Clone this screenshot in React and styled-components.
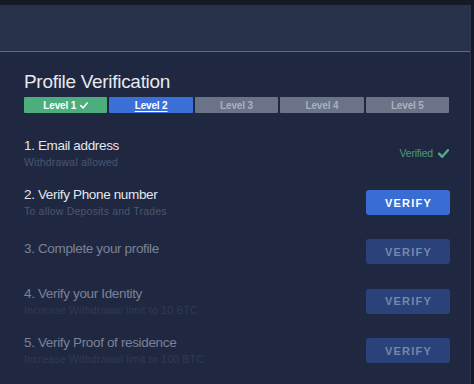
import React from "react";
import styled, { createGlobalStyle } from "styled-components";

const Global = createGlobalStyle`
  html, body { margin: 0; padding: 0; background: #161a27; }
  body { font-family: "Liberation Sans", Arial, sans-serif; }
  * { box-sizing: border-box; }
`;

const Page = styled.div`
  width: 474px;
  height: 384px;
  padding-top: 5px;
  padding-right: 3px;
  background: #161a27;
  overflow: hidden;
`;

const Panel = styled.div`
  height: 100%;
  background: #1f2840;
  border-right: 1px solid #2c3550;
`;

const Header = styled.div`
  height: 47px;
  background: #28324b;
  border-bottom: 1px solid #5f6a86;
`;

const Content = styled.div`
  padding: 0 20px 0 24px;
`;

const Title = styled.h1`
  margin: 19px 0 4px;
  font-size: 19px;
  line-height: 22px;
  font-weight: 400;
  letter-spacing: -0.3px;
  color: #e6e8ee;
`;

const LevelBar = styled.div`
  display: flex;
  gap: 2px;
  width: 425px;
  height: 16px;
`;

const levelBg = { done: "#4cad7d", active: "#3b70d8", locked: "#6b7388" };
const levelFg = { done: "#ffffff", active: "#ffffff", locked: "#a9b0c0" };

const Level = styled.div`
  flex: 1;
  display: flex;
  align-items: center;
  justify-content: center;
  gap: 4px;
  border-radius: 1px;
  background: ${(p) => levelBg[p.$state]};
  color: ${(p) => levelFg[p.$state]};
  font-size: 10px;
  font-weight: 700;
  letter-spacing: -0.15px;
  text-decoration: ${(p) => (p.$state === "active" ? "underline" : "none")};
  text-underline-offset: 1.5px;
`;

const List = styled.div`
  margin-top: 15.5px;
  display: flex;
  flex-direction: column;
`;

const Row = styled.div`
  height: 49.4px;
  display: flex;
  align-items: center;
  justify-content: space-between;
`;

const TextBlock = styled.div`
  display: flex;
  flex-direction: column;
`;

const ItemTitle = styled.div`
  font-size: 13.5px;
  line-height: 16px;
  letter-spacing: -0.35px;
  color: ${(p) => (p.$dim ? "#7a8298" : "#e4e6ec")};
  margin-bottom: ${(p) => (p.$alone ? "6px" : "0")};
`;

const ItemSub = styled.div`
  margin-top: 2px;
  font-size: 10.5px;
  line-height: 13px;
  letter-spacing: 0.2px;
  color: ${(p) => (p.$dim ? "#313a55" : "#4c5570")};
`;

const Verified = styled.div`
  display: flex;
  align-items: center;
  gap: 5px;
  font-size: 10.5px;
  letter-spacing: -0.2px;
  color: #4a9d78;
  padding-right: 1px;
`;

const Button = styled.button`
  width: 84px;
  height: 25px;
  border: none;
  border-radius: 3px;
  background: ${(p) => (p.disabled ? "#29427a" : "#3a6dd4")};
  color: ${(p) => (p.disabled ? "#7787aa" : "#ffffff")};
  font-family: "Liberation Sans", Arial, sans-serif;
  font-size: 11px;
  font-weight: 700;
  letter-spacing: 1.2px;
  padding: 0 0 0 1px;
  cursor: ${(p) => (p.disabled ? "default" : "pointer")};
`;

const Check = ({ color, w = 10, h = 8, sw = 2 }) => (
  <svg width={w} height={h} viewBox="0 0 10 8" fill="none">
    <path d="M1 4.2 L3.8 7 L9 1" stroke={color} strokeWidth={sw} strokeLinecap="round" strokeLinejoin="round" />
  </svg>
);

const levels = [
  { label: "Level 1", state: "done" },
  { label: "Level 2", state: "active" },
  { label: "Level 3", state: "locked" },
  { label: "Level 4", state: "locked" },
  { label: "Level 5", state: "locked" },
];

const items = [
  { title: "1. Email address", sub: "Withdrawal allowed", status: "verified" },
  { title: "2. Verify Phone number", sub: "To allow Deposits and Trades", status: "open" },
  { title: "3. Complete your profile", status: "locked" },
  { title: "4. Verify your Identity", sub: "Increase Withdrawal limit to 10 BTC", status: "locked" },
  { title: "5. Verify Proof of residence", sub: "Increase Withdrawal limit to 100 BTC", status: "locked" },
];

export default function App() {
  return (
    <>
      <Global />
      <Page>
        <Panel>
          <Header />
          <Content>
            <Title>Profile Verification</Title>
            <LevelBar>
              {levels.map((l) => (
                <Level key={l.label} $state={l.state}>
                  {l.label}
                  {l.state === "done" && <Check color="#ffffff" w={8} h={7} sw={1.9} />}
                </Level>
              ))}
            </LevelBar>
            <List>
              {items.map((it) => {
                const dim = it.status === "locked";
                return (
                  <Row key={it.title}>
                    <TextBlock>
                      <ItemTitle $dim={dim} $alone={!it.sub}>{it.title}</ItemTitle>
                      {it.sub && <ItemSub $dim={dim}>{it.sub}</ItemSub>}
                    </TextBlock>
                    {it.status === "verified" ? (
                      <Verified>
                        Verified
                        <Check color="#4fae80" w={11} h={9} sw={2.2} />
                      </Verified>
                    ) : (
                      <Button disabled={dim}>VERIFY</Button>
                    )}
                  </Row>
                );
              })}
            </List>
          </Content>
        </Panel>
      </Page>
    </>
  );
}
